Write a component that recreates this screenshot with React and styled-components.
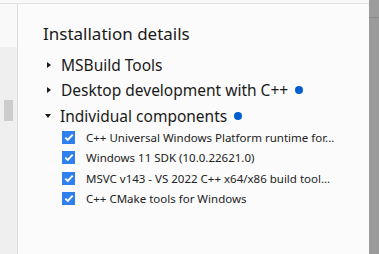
import styled, { createGlobalStyle } from "styled-components";

const Global = createGlobalStyle`
  html, body { margin: 0; padding: 0; }
  body { font-family: "Noto Sans", "Segoe UI", sans-serif; color: #1a1a1a; }
`;

const Frame = styled.div`
  width: 379px;
  height: 254px;
  display: flex;
  overflow: hidden;
  background: #fbfbfb;
`;

const Body = styled.div`
  flex: 1;
  display: flex;
  flex-direction: column;
`;

const TopBar = styled.div`
  height: 3px;
  border-bottom: 1px solid #e3e3e3;
  background: #f9f9f9;
`;

const Columns = styled.div`
  flex: 1;
  display: flex;
`;

const SideStrip = styled.div`
  width: 17px;
  border-right: 1px solid #dedede;
  display: flex;
  flex-direction: column;
`;

const SideTop = styled.div`
  height: 43px;
  background: #f9f9f9;
`;

const SideRest = styled.div`
  flex: 1;
  background: #efefef;
  padding: 53px 0 0 4px;
`;

const SideThumb = styled.div`
  width: 9px;
  height: 21px;
  background: #cccccc;
`;

const Panel = styled.div`
  flex: 1;
  padding: 18px 0 0 25px;
`;

const Heading = styled.h2`
  margin: 0 0 6px;
  font-size: 17px;
  font-weight: 400;
  line-height: 24px;
`;

const TreeRow = styled.div`
  display: flex;
  align-items: center;
  height: 25.5px;
  font-size: 15.5px;
  padding-left: ${(p) => (p.$open ? "2px" : "4px")};
`;

const Caret = styled.span`
  width: 0;
  height: 0;
  margin-right: ${(p) => (p.$open ? "9px" : "10px")};
  border-style: solid;
  border-color: transparent;
  ${(p) =>
    p.$open
      ? "border-width: 4px 3.5px 0 3.5px; border-top-color: #1a1a1a;"
      : "border-width: 3.5px 0 3.5px 4px; border-left-color: #1a1a1a;"}
`;

const Dot = styled.span`
  width: 8px;
  height: 8px;
  border-radius: 50%;
  background: #005fcf;
  margin-left: 7px;
`;

const CheckList = styled.div`
  margin-top: -1px;
  padding-left: 19px;
`;

const CheckRow = styled.div`
  display: flex;
  align-items: center;
  height: 20.3px;
  font-size: 11.5px;
  color: #222;
`;

const Box = styled.span`
  width: 13px;
  height: 13px;
  background: #2f80ed;
  margin-right: 11px;
  display: flex;
  align-items: center;
  justify-content: center;
`;

const ScrollTrack = styled.div`
  width: 10px;
  background: #9a9a9a;
  display: flex;
  flex-direction: column;
`;

const ScrollCap = styled.div`
  height: 17px;
  border-bottom: 1px solid #8a8a8a;
  background: #9c9c9c;
`;

function Check() {
  return (
    <svg width="10" height="9" viewBox="0 0 10 9">
      <path d="M1.3 4.6 L3.8 7 L8.7 1.6" fill="none" stroke="#fff" strokeWidth="1.9" />
    </svg>
  );
}

const groups = [
  { label: "MSBuild Tools" },
  { label: "Desktop development with C++", changed: true },
  { label: "Individual components", changed: true, open: true },
];

const components = [
  "C++ Universal Windows Platform runtime for...",
  "Windows 11 SDK (10.0.22621.0)",
  "MSVC v143 - VS 2022 C++ x64/x86 build tool...",
  "C++ CMake tools for Windows",
];

export default function App() {
  return (
    <Frame>
      <Global />
      <Body>
        <TopBar />
        <Columns>
          <SideStrip>
            <SideTop />
            <SideRest>
              <SideThumb />
            </SideRest>
          </SideStrip>
          <Panel>
            <Heading>Installation details</Heading>
            {groups.map((g) => (
              <TreeRow key={g.label} $open={g.open}>
                <Caret $open={g.open} />
                {g.label}
                {g.changed && <Dot />}
              </TreeRow>
            ))}
            <CheckList>
              {components.map((c) => (
                <CheckRow key={c}>
                  <Box>
                    <Check />
                  </Box>
                  {c}
                </CheckRow>
              ))}
            </CheckList>
          </Panel>
        </Columns>
      </Body>
      <ScrollTrack>
        <ScrollCap />
      </ScrollTrack>
    </Frame>
  );
}
